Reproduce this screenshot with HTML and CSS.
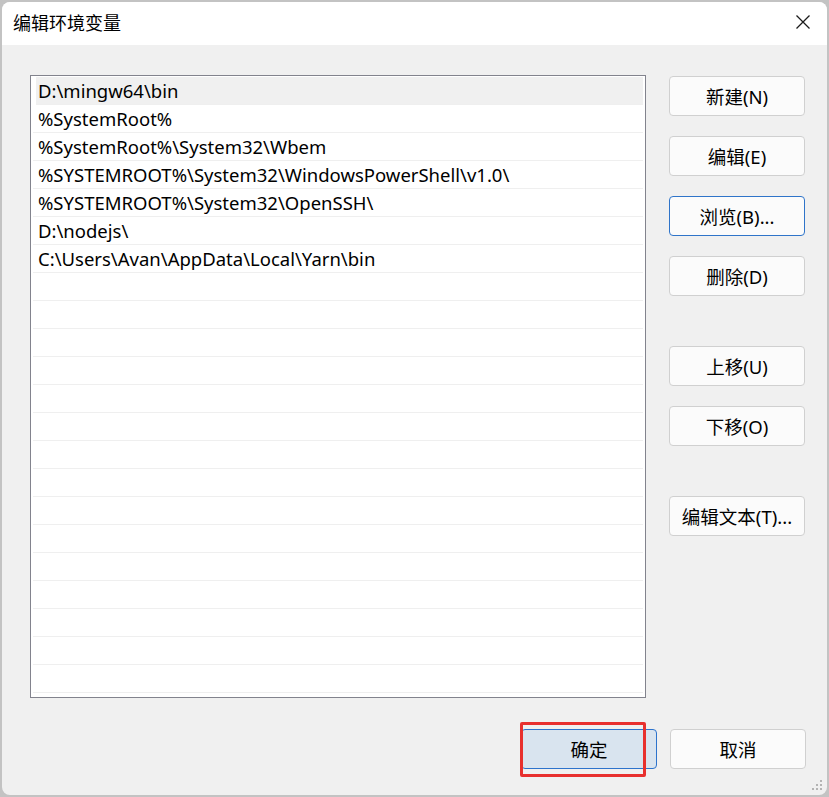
FILE: index.html
```html
<!DOCTYPE html>
<html lang="zh-CN">
<head>
    <meta charset="UTF-8">
    <title>编辑环境变量</title>
    <link rel="stylesheet" href="styles.css">
</head>
<body>

    <div class="dialog">
        <div class="title-bar">
            <span class="title">编辑环境变量</span>
            <span class="close">
                <svg width="16" height="16" viewBox="0 0 16 16">
                    <path d="M1.5 1.5 L14.5 14.5 M14.5 1.5 L1.5 14.5" stroke="#1b1b1b" stroke-width="1.3" fill="none"/>
                </svg>
            </span>
        </div>

        <div class="content">
            <div class="main">
                <div class="path-list">
                    <div class="row selected">D:\mingw64\bin</div>
                    <div class="row">%SystemRoot%</div>
                    <div class="row">%SystemRoot%\System32\Wbem</div>
                    <div class="row">%SYSTEMROOT%\System32\WindowsPowerShell\v1.0\</div>
                    <div class="row">%SYSTEMROOT%\System32\OpenSSH\</div>
                    <div class="row">D:\nodejs\</div>
                    <div class="row">C:\Users\Avan\AppData\Local\Yarn\bin</div>
                    <div class="row"></div>
                    <div class="row"></div>
                    <div class="row"></div>
                    <div class="row"></div>
                    <div class="row"></div>
                    <div class="row"></div>
                    <div class="row"></div>
                    <div class="row"></div>
                    <div class="row"></div>
                    <div class="row"></div>
                    <div class="row"></div>
                    <div class="row"></div>
                    <div class="row"></div>
                    <div class="row"></div>
                    <div class="row"></div>
                </div>

                <div class="side">
                    <div class="group">
                        <button class="btn">新建(N)</button>
                        <button class="btn">编辑(E)</button>
                        <button class="btn focused">浏览(B)...</button>
                        <button class="btn">删除(D)</button>
                    </div>
                    <div class="group">
                        <button class="btn">上移(U)</button>
                        <button class="btn">下移(O)</button>
                    </div>
                    <div class="group">
                        <button class="btn">编辑文本(T)...</button>
                    </div>
                </div>
            </div>

            <div class="footer">
                <button class="btn primary">确定<span class="mark"></span></button>
                <button class="btn">取消</button>
            </div>

            <svg class="grip" width="12" height="12" viewBox="0 0 12 12">
                <rect x="8" y="0" width="2" height="2" fill="#b4b4b4"/>
                <rect x="4" y="4" width="2" height="2" fill="#b4b4b4"/>
                <rect x="8" y="4" width="2" height="2" fill="#b4b4b4"/>
                <rect x="0" y="8" width="2" height="2" fill="#b4b4b4"/>
                <rect x="4" y="8" width="2" height="2" fill="#b4b4b4"/>
                <rect x="8" y="8" width="2" height="2" fill="#b4b4b4"/>
            </svg>
        </div>
    </div>

</body>
</html>
```

FILE: styles.css
```css
body {
    margin: 0;
    padding: 2px 0 0 2px;
    background-color: #c3c3c3;
    font-family: "Noto Sans", "Noto Sans CJK SC", sans-serif;
    color: #000000;
    height: 797px;
    box-sizing: border-box;
    overflow: hidden;
}

.dialog {
    width: 825px;
    height: 793px;
    border-radius: 8px;
    overflow: hidden;
    background-color: #f0f0f0;
    display: flex;
    flex-direction: column;
}

.title-bar {
    height: 43px;
    background-color: #ffffff;
    display: flex;
    align-items: center;
    justify-content: space-between;
    padding: 0 16px 0 11px;
}

.title {
    font-size: 18px;
    margin-top: -3px;
}

.close {
    display: flex;
    margin-top: -3px;
}

.content {
    flex-grow: 1;
    padding: 30px 21px 0 28px;
    position: relative;
}

.main {
    display: flex;
    gap: 23px;
}

/* list of paths */
.path-list {
    width: 616px;
    height: 623px;
    box-sizing: border-box;
    border: 1px solid #82838d;
    background-color: #ffffff;
    padding: 1px 2px 0 2px;
    overflow: hidden;
}

.row {
    height: 28px;
    box-sizing: border-box;
    border-bottom: 1px solid #efefef;
    font-size: 18.5px;
    line-height: 27px;
    padding-left: 5px;
    white-space: nowrap;
}

.row.selected {
    background-color: #f0f0f0;
    margin-left: 3px;
    padding-left: 2px;
}

.side {
    display: flex;
    flex-direction: column;
    gap: 50px;
    padding-top: 1px;
}

.group {
    display: flex;
    flex-direction: column;
    gap: 20px;
}

/* buttons */
.btn {
    width: 136px;
    height: 40px;
    box-sizing: border-box;
    background-color: #fbfbfb;
    border: 1px solid #d0d0d0;
    border-radius: 4px;
    font-family: "Noto Sans", "Noto Sans CJK SC", sans-serif;
    font-size: 18.5px;
    color: #000000;
    padding: 0;
}

.btn.focused {
    border-color: #2f74c9;
}

.btn.primary {
    background-color: #d9e4ef;
    border-color: #2d73cc;
    position: relative;
}

.footer {
    display: flex;
    justify-content: flex-end;
    gap: 13px;
    margin-top: 31px;
}

/* red highlight drawn over the OK button */
.mark {
    position: absolute;
    left: -2px;
    top: -8px;
    width: 126px;
    height: 55px;
    box-sizing: border-box;
    border: 3px solid #e8302e;
    border-radius: 2px;
}

.grip {
    position: absolute;
    right: 3px;
    bottom: 3px;
}
```
